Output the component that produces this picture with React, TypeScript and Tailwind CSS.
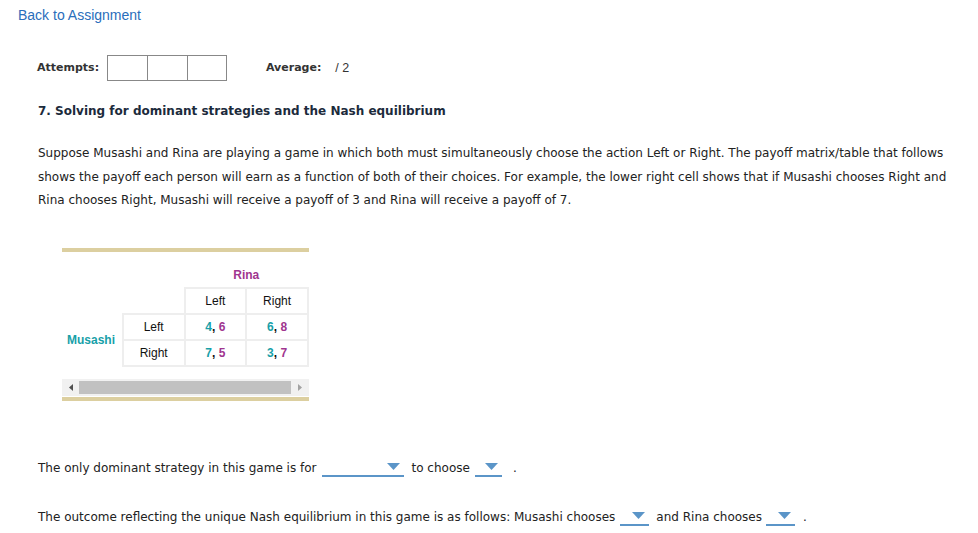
import React from "react";

const V = { fontFamily: '"DejaVu Sans", Verdana, sans-serif' };
const A = { fontFamily: '"Liberation Sans", Arial, sans-serif' };

function Drop({ w }: { w: number }) {
  return (
    <span
      className="inline-flex items-end justify-end border-b-2 border-[#5b95c8] self-start"
      style={{ width: w, height: 19 }}
    >
      <svg width="13" height="7" viewBox="0 0 13 7" className="mb-[5px] mr-[4px]">
        <path d="M0 0 L13 0 L6.5 7 Z" fill="#5b95c8" />
      </svg>
    </span>
  );
}

export default function App() {
  const cell = "border-2 border-[#eeeeee] text-center h-[26px] p-0";
  return (
    <div className="bg-white w-[978px] h-[533px] relative text-[#222]" style={V}>
      <div className="pt-[3px] pl-[18px] leading-[24px]">
        <a className="text-[14px] text-[#2a6ebb]" style={A}>Back to Assignment</a>
      </div>

      <div className="flex items-center pl-[37px] mt-[28px] h-[26px]">
        <span className="text-[11px] font-bold text-[#333] w-[70px]" style={V}>Attempts:</span>
        <div className="flex border border-[#888] h-[26px]">
          <div className="w-[40px] border-r border-[#888]" />
          <div className="w-[40px] border-r border-[#888]" />
          <div className="w-[38px]" />
        </div>
        <span className="text-[11px] font-bold text-[#333] ml-[39px]" style={V}>Average:</span>
        <span className="text-[12.5px] text-[#333] ml-[14px]" style={A}>/ 2</span>
      </div>

      <h2 className="pl-[38px] mt-[21px] text-[12px] font-bold text-[#1c2b3c] leading-[18px]" style={V}>
        7. Solving for dominant strategies and the Nash equilibrium
      </h2>

      <p className="pl-[38px] pr-[20px] mt-[22px] text-[12px] leading-[23.5px] text-[#222]" style={V}>
        Suppose Musashi and Rina are playing a game in which both must simultaneously choose the action Left or Right. The payoff matrix/table that follows shows the payoff each person will earn as a function of both of their choices. For example, the lower right cell shows that if Musashi chooses Right and Rina chooses Right, Musashi will receive a payoff of 3 and Rina will receive a payoff of 7.
      </p>

      <div className="ml-[62px] mt-[35px] w-[247px] border-t-4 border-b-4 border-[#dccfa0]" style={A}>
        <div className="h-[14px]" />
        <div className="flex">
          <div className="w-[60px] flex flex-col">
            <div className="h-[48px]" />
            <div className="h-[52px] flex items-center">
              <span className="text-[12px] font-bold text-[#17a0a8] ml-[5px]">Musashi</span>
            </div>
          </div>
          <table className="border-collapse text-[12px] text-[#111]">
            <tbody>
              <tr>
                <td className="w-[62px] p-0" />
                <td colSpan={2} className="text-center text-[#a0358f] font-bold h-[22px] p-0 leading-[18px] align-top">Rina</td>
              </tr>
              <tr>
                <td className="p-0" />
                <td className={cell + " w-[62px]"}>Left</td>
                <td className={cell + " w-[62px]"}>Right</td>
              </tr>
              <tr>
                <td className={cell}>Left</td>
                <td className={cell + " font-bold"}>
                  <span className="text-[#17a0a8]">4</span>, <span className="text-[#a0358f]">6</span>
                </td>
                <td className={cell + " font-bold"}>
                  <span className="text-[#17a0a8]">6</span>, <span className="text-[#a0358f]">8</span>
                </td>
              </tr>
              <tr>
                <td className={cell}>Right</td>
                <td className={cell + " font-bold"}>
                  <span className="text-[#17a0a8]">7</span>, <span className="text-[#a0358f]">5</span>
                </td>
                <td className={cell + " font-bold"}>
                  <span className="text-[#17a0a8]">3</span>, <span className="text-[#a0358f]">7</span>
                </td>
              </tr>
            </tbody>
          </table>
        </div>
        <div className="mt-[12px] h-[17px] bg-[#f1f1f1] flex items-center">
          <div className="w-[17px] flex justify-center">
            <svg width="4" height="7" viewBox="0 0 4 7"><path d="M4 0 L0 3.5 L4 7 Z" fill="#505050" /></svg>
          </div>
          <div className="h-[13px] w-[212px] bg-[#c1c1c1]" />
          <div className="flex-1 flex justify-center">
            <svg width="4" height="7" viewBox="0 0 4 7"><path d="M0 0 L4 3.5 L0 7 Z" fill="#a3a3a3" /></svg>
          </div>
        </div>
        <div className="h-[1px]" />
      </div>

      <div className="pl-[38px] mt-[57px] text-[12px] text-[#222] flex items-center h-[20px]" style={V}>
        <span>The only dominant strategy in this game is for</span>
        <span className="ml-[6px] flex h-[20px]"><Drop w={82} /></span>
        <span className="ml-[7px]">to choose</span>
        <span className="ml-[5px] flex h-[20px]"><Drop w={27} /></span>
        <span className="ml-[11px]">.</span>
      </div>

      <div className="pl-[38px] mt-[29px] text-[12px] text-[#222] flex items-center h-[20px]" style={V}>
        <span>The outcome reflecting the unique Nash equilibrium in this game is as follows: Musashi chooses</span>
        <span className="ml-[5px] flex h-[20px]"><Drop w={29} /></span>
        <span className="ml-[7px]">and Rina chooses</span>
        <span className="ml-[4px] flex h-[20px]"><Drop w={29} /></span>
        <span className="ml-[8px]">.</span>
      </div>
    </div>
  );
}
